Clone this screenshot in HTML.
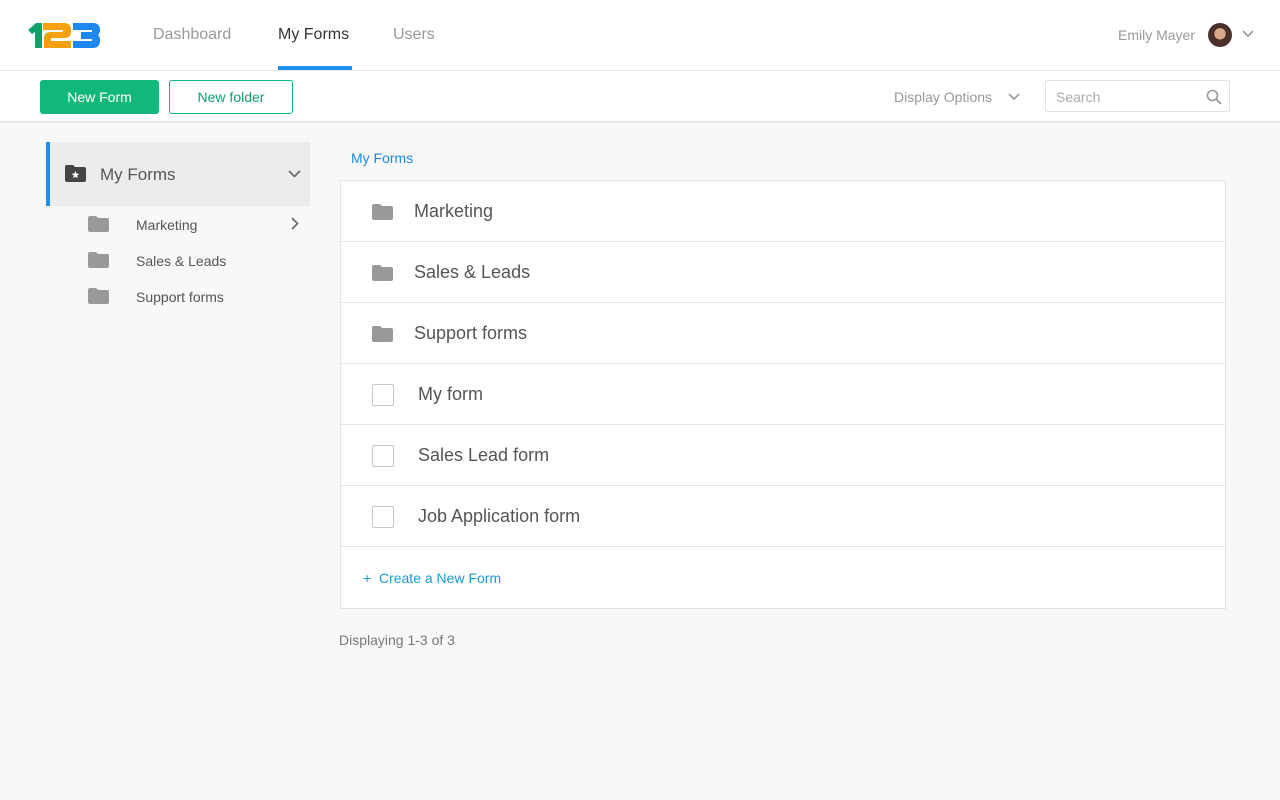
<!DOCTYPE html>
<html><head><style>
*{box-sizing:border-box;margin:0;padding:0}
body{width:1280px;height:800px;background:#f8f8f8;font-family:"Liberation Sans",sans-serif;position:relative;overflow:hidden;color:#555}
.top{position:absolute;left:0;top:0;width:1280px;height:71px;background:#fff;border-bottom:1px solid #e2e2e2}
.nav{position:absolute;top:26px;font-size:16px;color:#999}
.bar{position:absolute;top:71px;left:0;width:1280px;height:51px;background:#fff;border-bottom:1px solid #e0e0e0;box-shadow:0 1px 2px rgba(0,0,0,.05)}
.btn{position:absolute;top:9px;height:34px;border-radius:3px;font-size:14px;display:flex;align-items:center;justify-content:center}
.side{position:absolute;left:46px;top:142px;width:264px;height:64px;background:#ececec;border-left:4px solid #1e90f0}
.si{position:absolute;left:136px;font-size:14px;color:#555}
.sf{position:absolute;left:88px}
.panel{position:absolute;left:340px;top:180px;width:886px;height:429px;background:#fff;border:1px solid #e3e3e3}
.row{position:absolute;left:0;width:884px;height:61px;border-bottom:1px solid #e3e3e3}
.row span{position:absolute;top:20px;font-size:18px;color:#555}
.row svg{position:absolute;left:31px;top:23px}
.cb{position:absolute;left:31px;top:20px;width:22px;height:22px;border:1px solid #c8c8c8;border-radius:2px}
</style></head><body>
<div class="top">
<svg style="position:absolute;left:27px;top:21px" width="75" height="28" viewBox="0 0 75 28">
<path d="M1 9 L9 2 H15 V27 H8 V11 L5 13 Z" fill="#12a06a"/>
<path d="M16 2 H37 Q44 2 44 9 V11 Q44 17 37 17 H24 V20 H44 V27 H17 V17 Q17 11 24 11 H36 V9 H16 Z" fill="#f5a00c"/>
<path d="M46 2 H66 Q73 2 73 9 Q73 12 71 14 Q73 16 73 19 Q73 27 66 27 H46 V20 H65 V18 H54 V11 H65 V9 H46 Z" fill="#1e88f0"/>
</svg>
<div class="nav" style="left:153px">Dashboard</div>
<div class="nav" style="left:278px;color:#333">My Forms</div>
<div style="position:absolute;left:278px;top:66px;width:74px;height:4px;background:#1e90f0"></div>
<div class="nav" style="left:393px">Users</div>
<div style="position:absolute;left:1118px;top:27px;font-size:14px;color:#999">Emily Mayer</div>
<div style="position:absolute;left:1208px;top:23px;width:24px;height:24px;border-radius:50%;background:radial-gradient(circle at 50% 45%,#d9a98a 0 30%,#4a3028 34%)"></div>
<svg style="position:absolute;left:1242px;top:30px" width="12" height="8"><path d="M1 1 L6 6 L11 1" stroke="#999" stroke-width="1.6" fill="none"/></svg>
</div>
<div class="bar">
<div class="btn" style="left:40px;width:119px;background:#12b77a;color:#fff">New Form</div>
<div class="btn" style="left:169px;width:124px;border:1px solid #12b77a;color:#12a06a">New folder</div>
<div style="position:absolute;left:894px;top:18px;font-size:14px;color:#999">Display Options</div>
<svg style="position:absolute;left:1008px;top:22px" width="12" height="8"><path d="M1 1 L6 6 L11 1" stroke="#999" stroke-width="1.6" fill="none"/></svg>
<div style="position:absolute;left:1045px;top:9px;width:185px;height:32px;border:1px solid #e0e0e0;border-radius:2px"><span style="position:absolute;left:10px;top:8px;font-size:14px;color:#aaa">Search</span>
<svg style="position:absolute;left:160px;top:8px" width="16" height="16"><circle cx="6.5" cy="6.5" r="5" stroke="#999" stroke-width="1.6" fill="none"/><path d="M10 10 L15 15" stroke="#999" stroke-width="1.8"/></svg></div>
</div>
<div class="side">
<svg style="position:absolute;left:15px;top:23px" width="21" height="17" viewBox="0 0 21 17"><path d="M0 2 Q0 0 2 0 H8 L10 2 H19 Q21 2 21 4 V15 Q21 17 19 17 H2 Q0 17 0 15Z" fill="#444"/><path d="M10.5 6 L11.6 8.6 L14.3 8.8 L12.2 10.6 L12.9 13.3 L10.5 11.8 L8.1 13.3 L8.8 10.6 L6.7 8.8 L9.4 8.6Z" fill="#fff"/></svg>
<div style="position:absolute;left:50px;top:23px;font-size:17px;color:#555">My Forms</div>
<svg style="position:absolute;left:238px;top:28px" width="13" height="8"><path d="M1 1 L6.5 6.5 L12 1" stroke="#666" stroke-width="1.6" fill="none"/></svg>
</div>
<svg class="sf" style="top:216px" width="21" height="16" viewBox="0 0 21 16"><path d="M0 2 Q0 0 2 0 H8 L10 2 H19 Q21 2 21 4 V14 Q21 16 19 16 H2 Q0 16 0 14Z" fill="#999"/></svg>
<div class="si" style="top:217px">Marketing</div>
<svg style="position:absolute;left:291px;top:217px" width="8" height="13"><path d="M1 1 L6.5 6.5 L1 12" stroke="#666" stroke-width="1.6" fill="none"/></svg>
<svg class="sf" style="top:252px" width="21" height="16" viewBox="0 0 21 16"><path d="M0 2 Q0 0 2 0 H8 L10 2 H19 Q21 2 21 4 V14 Q21 16 19 16 H2 Q0 16 0 14Z" fill="#999"/></svg>
<div class="si" style="top:253px">Sales &amp; Leads</div>
<svg class="sf" style="top:288px" width="21" height="16" viewBox="0 0 21 16"><path d="M0 2 Q0 0 2 0 H8 L10 2 H19 Q21 2 21 4 V14 Q21 16 19 16 H2 Q0 16 0 14Z" fill="#999"/></svg>
<div class="si" style="top:289px">Support forms</div>
<div style="position:absolute;left:351px;top:150px;font-size:14px;color:#1e88e0">My Forms</div>
<div class="panel">
<div class="row" style="top:0"><svg width="21" height="16" viewBox="0 0 21 16"><path d="M0 2 Q0 0 2 0 H8 L10 2 H19 Q21 2 21 4 V14 Q21 16 19 16 H2 Q0 16 0 14Z" fill="#999"/></svg><span style="left:73px">Marketing</span></div>
<div class="row" style="top:61px"><svg width="21" height="16" viewBox="0 0 21 16"><path d="M0 2 Q0 0 2 0 H8 L10 2 H19 Q21 2 21 4 V14 Q21 16 19 16 H2 Q0 16 0 14Z" fill="#999"/></svg><span style="left:73px">Sales &amp; Leads</span></div>
<div class="row" style="top:122px"><svg width="21" height="16" viewBox="0 0 21 16"><path d="M0 2 Q0 0 2 0 H8 L10 2 H19 Q21 2 21 4 V14 Q21 16 19 16 H2 Q0 16 0 14Z" fill="#999"/></svg><span style="left:73px">Support forms</span></div>
<div class="row" style="top:183px"><div class="cb"></div><span style="left:77px">My form</span></div>
<div class="row" style="top:244px"><div class="cb"></div><span style="left:77px">Sales Lead form</span></div>
<div class="row" style="top:305px"><div class="cb"></div><span style="left:77px">Job Application form</span></div>
<div style="position:absolute;left:22px;top:389px;font-size:14px;color:#1a9ad8">+&nbsp; Create a New Form</div>
</div>
<div style="position:absolute;left:339px;top:632px;font-size:14px;color:#777">Displaying 1-3 of 3</div>
</body></html>
